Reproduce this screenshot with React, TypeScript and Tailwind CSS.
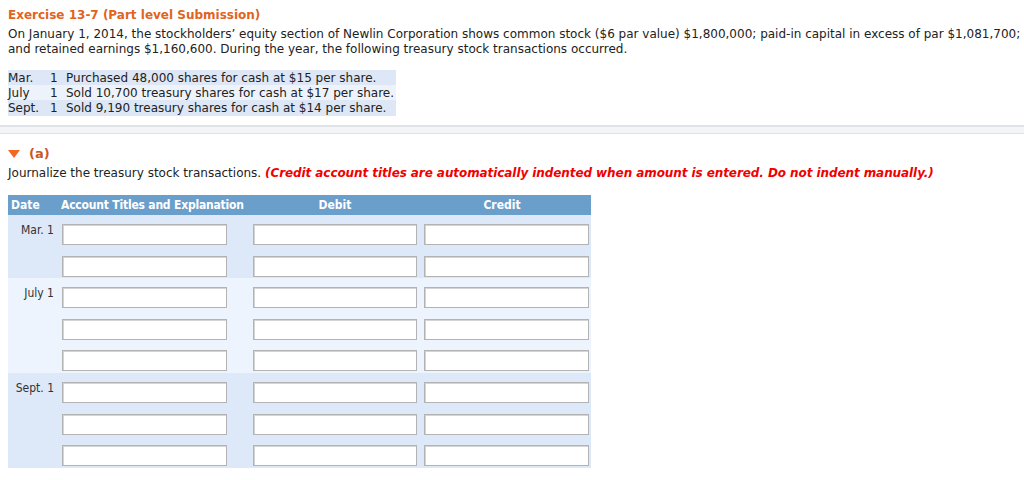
const body = "font-['DejaVu_Sans',Verdana,sans-serif]"
const tahoma = "font-['DejaVu_Sans_Condensed','Liberation_Sans',Tahoma,sans-serif]"

const transactions = [
  { month: "Mar.", day: "1", text: "Purchased 48,000 shares for cash at $15 per share.", bg: "bg-[#dde7f6]", h: "h-[15px]" },
  { month: "July", day: "1", text: "Sold 10,700 treasury shares for cash at $17 per share.", bg: "bg-[#eef3fb]", h: "h-[15px]" },
  { month: "Sept.", day: "1", text: "Sold 9,190 treasury shares for cash at $14 per share.", bg: "bg-[#dde7f6]", h: "h-[16px]" },
]

const groups = [
  { date: "Mar. 1", rows: 2, bg: "bg-[#dde8f8]" },
  { date: "July 1", rows: 3, bg: "bg-[#edf4fe]" },
  { date: "Sept. 1", rows: 3, bg: "bg-[#dde8f8]" },
]

function Field({ className }: { className: string }) {
  return (
    <div
      className={`h-[21px] bg-white border border-[#b3b3b3] shadow-[inset_1px_1px_0_#d4d4d4] ${className}`}
    />
  )
}

function JournalRow({ label }: { label?: string }) {
  return (
    <div className="flex h-[31.6px]">
      <div className={`w-[50px] pt-[8px] pr-[4px] text-right text-[12px] leading-[15px] text-[#333] ${tahoma}`}>
        {label}
      </div>
      <div className="pt-[9px] ml-[4px]">
        <Field className="w-[165px]" />
      </div>
      <div className="pt-[9px] ml-[26px]">
        <Field className="w-[164px]" />
      </div>
      <div className="pt-[9px] ml-[7px]">
        <Field className="w-[165px]" />
      </div>
    </div>
  )
}

export default function App() {
  return (
    <div className={`w-[1024px] h-[480px] bg-white text-[#222] overflow-hidden ${body}`}>
      <div className="px-2">
        <h1 className="pt-[7px] text-[12px] leading-4 font-bold text-[#e0641e]">
          Exercise 13-7 (Part level Submission)
        </h1>
        <p className="mt-1 text-[12px] leading-[15px] whitespace-nowrap">
          On January 1, 2014, the stockholders’ equity section of Newlin Corporation shows common stock ($6 par value) $1,800,000; paid-in capital in excess of par $1,081,700;
          <br />
          and retained earnings $1,160,600. During the year, the following treasury stock transactions occurred.
        </p>

        <div className="mt-[13px] w-[388px] text-[12px]">
          {transactions.map((t) => (
            <div key={t.month} className={`flex items-center ${t.h} ${t.bg}`}>
              <span className="w-[42px]">{t.month}</span>
              <span className="w-[16px]">{t.day}</span>
              <span>{t.text}</span>
            </div>
          ))}
        </div>
      </div>

      <div className="mt-[9px] h-[9px] bg-[#f3f5f8] border-t-2 border-b border-[#dfe3e8]" />

      <div className="px-2">
        <div className="mt-[12px] flex items-center h-4 gap-[9px]">
          <svg width="12" height="8" viewBox="0 0 12 8">
            <polygon points="0,0 12,0 6,8" fill="#f26a21" />
          </svg>
          <span className="text-[13px] font-bold text-[#c9581e]">(a)</span>
        </div>
        <p className="mt-[4px] text-[12px] leading-[15px] whitespace-nowrap">
          Journalize the treasury stock transactions.{" "}
          <span className="font-bold italic tracking-[-0.08px] text-[#f00000]">
            (Credit account titles are automatically indented when amount is entered. Do not indent manually.)
          </span>
        </p>

        <div className="mt-[14px] w-[583px]">
          <div className={`flex items-center h-[20px] bg-[#6a9ecb] text-white text-[12px] font-bold ${tahoma}`}>
            <span className="w-[53px] pl-[3px]">Date</span>
            <span className="w-[192px] tracking-[-0.2px]">Account Titles and Explanation</span>
            <span className="w-[164px] text-center">Debit</span>
            <span className="w-[170px] text-center">Credit</span>
          </div>
          {groups.map((g) => (
            <div key={g.date} className={g.bg}>
              {Array.from({ length: g.rows }).map((_, i) => (
                <JournalRow key={i} label={i === 0 ? g.date : undefined} />
              ))}
            </div>
          ))}
        </div>
      </div>
    </div>
  )
}
